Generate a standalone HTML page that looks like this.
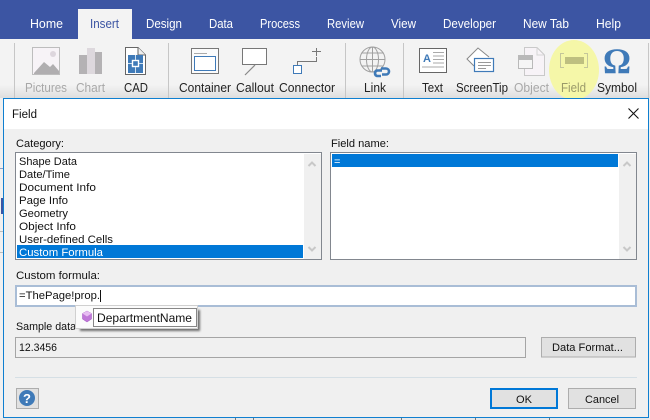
<!DOCTYPE html>
<html><head><meta charset="utf-8"><style>
html,body{margin:0;padding:0;background:#f0f0f0;width:650px;height:420px;overflow:hidden}
svg{display:block}
text{font-family:"Liberation Sans",sans-serif;fill:#111}
.t{font-size:12.5px;fill:#fff}
.r{font-size:12.5px;fill:#222}
.g{font-size:12.5px;fill:#a8a8a8}
.d{font-size:11px;fill:#111}
</style></head><body>
<svg width="650" height="420" viewBox="0 0 650 420" xmlns="http://www.w3.org/2000/svg" shape-rendering="crispEdges">
<defs><filter id="b" x="-20%" y="-40%" width="140%" height="180%"><feGaussianBlur stdDeviation="1"/></filter>
<linearGradient id="sh" x1="0" y1="0" x2="0" y2="1"><stop offset="0" stop-color="#f3f3f3"/><stop offset="1" stop-color="#dedede"/></linearGradient>
<clipPath id="sd"><rect x="0" y="315" width="75" height="22"/></clipPath></defs>
<rect width="650" height="420" fill="#f0f0f0"/>
<rect width="650" height="39" fill="#3c55a3"/>
<rect x="78" y="9" width="54" height="30" fill="#f3f3f3"/>
<rect y="39" width="650" height="59" fill="#f3f3f3"/>
<rect y="85" width="650" height="13" fill="url(#sh)"/>
<text class="t" x="30" y="28" textLength="33" lengthAdjust="spacingAndGlyphs">Home</text>
<text class="t" x="90" y="28" textLength="29" lengthAdjust="spacingAndGlyphs" style="fill:#3c55a3">Insert</text>
<text class="t" x="146" y="28" textLength="36" lengthAdjust="spacingAndGlyphs">Design</text>
<text class="t" x="209" y="28" textLength="24" lengthAdjust="spacingAndGlyphs">Data</text>
<text class="t" x="260" y="28" textLength="40" lengthAdjust="spacingAndGlyphs">Process</text>
<text class="t" x="327" y="28" textLength="37" lengthAdjust="spacingAndGlyphs">Review</text>
<text class="t" x="391" y="28" textLength="25" lengthAdjust="spacingAndGlyphs">View</text>
<text class="t" x="443" y="28" textLength="53" lengthAdjust="spacingAndGlyphs">Developer</text>
<text class="t" x="523" y="28" textLength="46" lengthAdjust="spacingAndGlyphs">New Tab</text>
<text class="t" x="596" y="28" textLength="25" lengthAdjust="spacingAndGlyphs">Help</text>

<g fill="#c6c6c6"><rect x="14" y="43" width="1" height="55"/><rect x="168" y="43" width="1" height="55"/><rect x="345" y="43" width="1" height="55"/><rect x="403" y="43" width="1" height="55"/></g>

<g shape-rendering="auto">
<!-- Pictures -->
<rect x="32.500" y="47.500" width="27" height="27" fill="#f7f3f7" stroke="#bdbdbd"/>
<circle cx="53" cy="54" r="3" fill="#ddd6dd"/>
<path d="M34 73 L44 62 L50 67 L53 64 L59 71 V74 H34Z" fill="#b0aeb0"/>
<rect x="79" y="55" width="8" height="19" fill="#b4b2b4"/><rect x="87" y="48" width="8" height="26" fill="#ddd8dd"/><rect x="95" y="52" width="7" height="22" fill="#b4b2b4"/>
<!-- CAD -->
<path d="M125.500 47.500H138L145.500 55V74.500H125.500Z" fill="#fff" stroke="#666"/>
<path d="M138 47.500V55H145.500" fill="#eee" stroke="#666"/>
<rect x="128" y="55" width="15" height="18" fill="#3f7ab8"/>
<rect x="132.500" y="60.500" width="6" height="6" fill="#3f7ab8" stroke="#fff" stroke-width="1.400"/>
<path d="M128 63.500H132M139 63.500H143M135.500 55V60M135.500 67V73" stroke="#cfe0f0" stroke-width="1"/>
<!-- Container -->
<rect x="191.500" y="48.500" width="27" height="25" fill="#fbfbfb" stroke="#777"/>
<path d="M194 53.500H207" stroke="#aaa"/>
<rect x="194.500" y="56.500" width="21" height="14" fill="#fff" stroke="#3f7ab8"/>
<!-- Callout -->
<rect x="242.500" y="48.500" width="24" height="16" fill="#fff" stroke="#777"/>
<path d="M255 65L245 75" stroke="#888" stroke-width="1.200" fill="none"/>
<!-- Connector -->
<rect x="293.500" y="65.500" width="8" height="8" fill="#fff" stroke="#3f7ab8"/>
<path d="M297.500 65V61.500H316.500V57M312 51.500H321M316.500 48V56" stroke="#777" fill="none"/>
<!-- Link -->
<g fill="none" stroke="#a0a0a0"><circle cx="372.500" cy="59.500" r="12.500"/><ellipse cx="372.500" cy="59.500" rx="6" ry="12.500"/><path d="M360 59.500H385M362 53H383M362 66H383M372.500 47V72"/></g>
<path d="M382 70.500 H377 A2.900 2.900 0 0 0 377 76 H381" fill="none" stroke="#3f7ab8" stroke-width="2.600"/>
<path d="M381 68.500 H386 A3 3 0 0 1 386 74.500 H382" fill="none" stroke="#3f7ab8" stroke-width="2.600"/>
<!-- Text -->
<rect x="419.500" y="48.500" width="27" height="24" fill="#fff" stroke="#666"/>
<text x="423" y="62" style="font-size:11px;font-weight:bold;fill:#3f7ab8">A</text>
<path d="M433 52.500H444M433 56H444M433 59.500H444M433 63H444M422 67H444" stroke="#aaa" fill="none"/>
<!-- ScreenTip -->
<path d="M474 66 L467 59 L478 48 L489 57" fill="#fff" stroke="#888"/>
<rect x="474.500" y="58.500" width="19" height="13" fill="#fff" stroke="#3f7ab8" stroke-width="1.200"/>
<path d="M478 62.500H491M478 65.500H491M478 68.500H486" stroke="#999"/>
<!-- Object -->
<path d="M524.500 47.500H537L544.500 55V75.500H524.500Z" fill="#f7f3f7" stroke="#c9c9c9"/>
<path d="M537 47.500V55H544.500" fill="none" stroke="#d4d4d4"/>
<rect x="518.500" y="55.500" width="14" height="13" fill="#f5f5f5" stroke="#b9b9b9"/>
<rect x="519" y="56" width="13" height="4" fill="#b9b9b9"/>
<!-- Field highlight -->
<ellipse cx="574" cy="70" rx="25" ry="30" fill="#f5f7a8"/>
<path d="M564 53.500H560.500V67.500H564M584 53.500H587.500V67.500H584" fill="none" stroke="#c4c69a"/>
<rect x="565" y="57" width="19" height="7" fill="#bebf80"/>
<!-- Omega -->
<text x="603" y="73" style="font-family:'Liberation Serif',serif;font-size:36px;font-weight:bold;fill:#3f7ab8" textLength="28" lengthAdjust="spacingAndGlyphs">Ω</text>
</g>
<rect x="648" y="43" width="1" height="55" fill="#c6c6c6"/>

<text class="g" x="25" y="92" textLength="42" lengthAdjust="spacingAndGlyphs">Pictures</text>
<text class="g" x="76" y="92" textLength="29" lengthAdjust="spacingAndGlyphs">Chart</text>
<text class="r" x="124" y="92" textLength="24" lengthAdjust="spacingAndGlyphs">CAD</text>
<text class="r" x="179" y="92" textLength="52" lengthAdjust="spacingAndGlyphs">Container</text>
<text class="r" x="236" y="92" textLength="38" lengthAdjust="spacingAndGlyphs">Callout</text>
<text class="r" x="279" y="92" textLength="56" lengthAdjust="spacingAndGlyphs">Connector</text>
<text class="r" x="364" y="92" textLength="22" lengthAdjust="spacingAndGlyphs">Link</text>
<text class="r" x="422" y="92" textLength="21" lengthAdjust="spacingAndGlyphs">Text</text>
<text class="r" x="456" y="92" textLength="52" lengthAdjust="spacingAndGlyphs">ScreenTip</text>
<text class="g" x="514" y="92" textLength="35" lengthAdjust="spacingAndGlyphs">Object</text>
<text class="r" x="561" y="92" textLength="25" lengthAdjust="spacingAndGlyphs" style="fill:#9a9a6a">Field</text>
<text class="r" x="597" y="92" textLength="40" lengthAdjust="spacingAndGlyphs">Symbol</text>

<!-- Dialog -->
<rect x="3.500" y="98.500" width="645" height="319" fill="#f0f0f0" stroke="#0f7fd0"/>
<rect x="4" y="99" width="644" height="30" fill="#fff"/>
<rect x="0" y="418" width="650" height="2" fill="#e8e8e8"/>
<text x="12" y="118" style="font-size:11.500px" textLength="25" lengthAdjust="spacingAndGlyphs">Field</text>
<path d="M628.500 108.500L638.500 118.500M638.500 108.500L628.500 118.500" stroke="#111" stroke-width="1.100" fill="none" shape-rendering="auto"/>

<text class="d" x="16" y="147" textLength="48" lengthAdjust="spacingAndGlyphs">Category:</text>
<text class="d" x="331" y="147" textLength="58" lengthAdjust="spacingAndGlyphs">Field name:</text>

<!-- Category list -->
<rect x="15.500" y="152.500" width="306" height="107" fill="#fff" stroke="#82878f"/>
<rect x="304" y="154" width="17" height="105" fill="#f0f0f0"/>
<rect x="17" y="245" width="286" height="13" fill="#0078d7"/>
<text class="d" x="19" y="165" textLength="58" lengthAdjust="spacingAndGlyphs">Shape Data</text>
<text class="d" x="19" y="178" textLength="51" lengthAdjust="spacingAndGlyphs">Date/Time</text>
<text class="d" x="19" y="191" textLength="77" lengthAdjust="spacingAndGlyphs">Document Info</text>
<text class="d" x="19" y="204" textLength="49" lengthAdjust="spacingAndGlyphs">Page Info</text>
<text class="d" x="19" y="217" textLength="49" lengthAdjust="spacingAndGlyphs">Geometry</text>
<text class="d" x="19" y="230" textLength="57" lengthAdjust="spacingAndGlyphs">Object Info</text>
<text class="d" x="19" y="243" textLength="94" lengthAdjust="spacingAndGlyphs">User-defined Cells</text>
<text class="d" x="19" y="256" textLength="84" lengthAdjust="spacingAndGlyphs" style="fill:#fff">Custom Formula</text>
<path d="M308.500 166L312 162.500L315.500 166M308.500 247L312 250.500L315.500 247" stroke="#c8c8c8" stroke-width="2" fill="none" shape-rendering="auto"/>

<!-- Field list -->
<rect x="330.500" y="152.500" width="306" height="107" fill="#fff" stroke="#82878f"/>
<rect x="619" y="154" width="17" height="105" fill="#f0f0f0"/>
<rect x="332" y="154" width="286" height="13" fill="#0078d7"/>
<text class="d" x="334" y="165" style="fill:#fff">=</text>
<path d="M623.500 166L627 162.500L630.500 166M623.500 247L627 250.500L630.500 247" stroke="#c8c8c8" stroke-width="2" fill="none" shape-rendering="auto"/>

<text class="d" x="16" y="279" textLength="84" lengthAdjust="spacingAndGlyphs">Custom formula:</text>
<rect x="16" y="286" width="620" height="20" fill="#fff" stroke="#a9bdd6" stroke-width="2"/>
<text class="d" x="19" y="299" textLength="81" lengthAdjust="spacingAndGlyphs">=ThePage!prop.</text>
<rect x="100" y="290" width="1" height="12" fill="#111"/>

<text class="d" x="16" y="330" textLength="63" lengthAdjust="spacingAndGlyphs" clip-path="url(#sd)">Sample data:</text>
<rect x="15.500" y="337.500" width="510" height="20" fill="#f0f0f0" stroke="#a5a5a5"/>
<text class="d" x="19" y="351" textLength="38" lengthAdjust="spacingAndGlyphs">12.3456</text>

<!-- Popup -->
<rect x="80" y="310" width="120" height="21" fill="#444" opacity=".75" filter="url(#b)" shape-rendering="auto"/>
<rect x="75.500" y="305.500" width="122" height="23" fill="#fbfbfb" stroke="#d0d0d0"/>
<path d="M87 311L91.500 313.500V319L87 322L82.500 319V313.500Z" fill="#c077d8" stroke="#a050c0" stroke-width=".5" shape-rendering="auto"/>
<path d="M87 311L91.500 313.500L87 316.500L82.500 313.500Z" fill="#e7bdf2" shape-rendering="auto"/>
<rect x="93.500" y="308.500" width="103" height="18" fill="#fff" stroke="#111" stroke-dasharray="1 1"/>
<text x="97" y="322" style="font-size:12px" textLength="95" lengthAdjust="spacingAndGlyphs">DepartmentName</text>

<!-- Data Format -->
<rect x="541.500" y="337.500" width="94" height="19.500" fill="#e1e1e1" stroke="#adadad"/>
<text class="d" x="552" y="351" textLength="71" lengthAdjust="spacingAndGlyphs">Data Format...</text>

<rect x="15" y="377" width="622" height="1" fill="#d5dfe5"/>

<!-- Help -->
<rect x="16.500" y="388.500" width="22" height="20" fill="#e1e1e1" stroke="#adadad"/>
<circle cx="27" cy="398" r="8" fill="#3f7ab8" shape-rendering="auto"/>
<text x="23" y="403" style="font-size:13px;font-weight:bold;fill:#fff">?</text>

<rect x="491" y="389" width="66" height="19" fill="#e1e1e1" stroke="#0078d7" stroke-width="2"/>
<text class="d" x="516" y="403" textLength="16" lengthAdjust="spacingAndGlyphs">OK</text>
<rect x="568.500" y="388.500" width="67" height="20" fill="#e1e1e1" stroke="#adadad"/>
<text class="d" x="585" y="403" textLength="34" lengthAdjust="spacingAndGlyphs">Cancel</text>

<!-- Background peeking left edge -->
<g><rect x="0" y="168" width="3" height="1" fill="#8aa0c8"/><rect x="1" y="198" width="2" height="16" fill="#3c55a3"/><rect x="0" y="231" width="3" height="1" fill="#bbb"/><rect x="0" y="252" width="3" height="1" fill="#bbb"/></g>
<g fill="#777"><rect x="235" y="418" width="1" height="2"/><rect x="253" y="418" width="1" height="2"/><rect x="401" y="418" width="1" height="2"/><rect x="475" y="418" width="1" height="2"/><rect x="549" y="418" width="1" height="2"/></g>
</svg>
</body></html>
